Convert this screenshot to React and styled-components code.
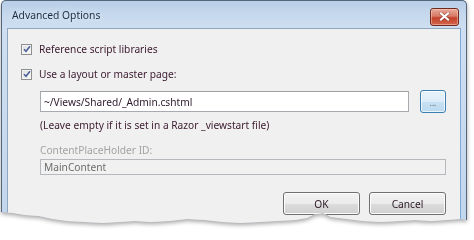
import React from "react";
import styled, { createGlobalStyle } from "styled-components";

const Global = createGlobalStyle`
  html, body { margin: 0; padding: 0; background: #ffffff; }
  body { width: 474px; height: 239px; overflow: hidden; font-family: "Noto Sans", "Open Sans", sans-serif; }
`;

const torn = [
  [0, 212], [12, 213], [24, 215], [38, 216], [52, 219], [66, 221], [84, 222], [102, 223], [118, 222],
  [134, 221], [150, 222], [168, 221], [186, 219], [204, 220], [222, 222], [240, 223], [258, 222],
  [276, 221], [294, 220], [306, 218], [314, 214], [322, 213], [330, 217], [346, 219], [362, 221],
  [380, 222], [398, 221], [414, 220], [430, 221], [446, 220], [458, 219], [466, 220],
];
const clip = `polygon(0 0, 466px 0, ${torn
  .slice()
  .reverse()
  .map(([x, y]) => `${x}px ${y}px`)
  .join(", ")})`;

const Stage = styled.div`
  padding: 0 0 0 1px;
  filter: drop-shadow(0 2px 2px rgba(0, 0, 0, 0.35));
`;

const Window = styled.div`
  width: 466px;
  height: 224px;
  box-sizing: border-box;
  border: 1px solid #55667a;
  border-bottom: none;
  border-radius: 5px 5px 0 0;
  background: linear-gradient(180deg, #b8cfe8 0px, #c6d8ed 14px, #cfdff1 28px, #c2d6ec 100%);
  clip-path: ${clip};
  display: flex;
  flex-direction: column;
  padding: 0 5px 0 5px;
`;

const TitleBar = styled.div`
  height: 27px;
  display: flex;
  align-items: center;
  justify-content: space-between;
  padding: 0 2px 0 5px;
`;

const Title = styled.span`
  font-size: 10.3px;
  color: #1b2f47;
  text-shadow: 0 0 6px rgba(255, 255, 255, 0.9);
`;

const CloseButton = styled.div`
  width: 27px;
  height: 16px;
  margin-top: 4px;
  border: 1px solid #70291d;
  border-radius: 3px;
  background: linear-gradient(180deg, #e9a998 0%, #d77a66 45%, #c4412b 55%, #d2664b 100%);
  display: flex;
  align-items: center;
  justify-content: center;
  box-shadow: inset 0 0 0 1px rgba(255, 220, 210, 0.45);
`;

const Client = styled.div`
  flex: 1;
  background: #f0f0f0;
  border: 1px solid #8fa6c0;
  border-right-color: #7fa9d8;
  border-bottom: none;
  display: flex;
  flex-direction: column;
  padding: 13px 14px 0 13px;
  color: #3b1a2e;
  font-size: 10.2px;
`;

const CheckRow = styled.label`
  display: flex;
  align-items: center;
  gap: 7px;
  height: 14px;
  margin-top: ${(p) => p.$mt || 0}px;
`;

const Box = styled.span`
  width: 9px;
  height: 9px;
  border: 1px solid #8e8f8f;
  background: linear-gradient(135deg, #dcdcdc, #fbfbfb);
  display: flex;
  align-items: center;
  justify-content: center;
  box-shadow: inset 0 0 0 1px #f4f4f4;
`;

const Indented = styled.div`
  padding-left: 19px;
  display: flex;
  flex-direction: column;
`;

const FieldRow = styled.div`
  display: flex;
  align-items: center;
  gap: 11px;
  margin-top: 9px;
`;

const TextBox = styled.div`
  flex: 1;
  box-sizing: border-box;
  border: 1px solid ${(p) => (p.$disabled ? "#b5b9bd" : "#a7abb0")};
  border-top-color: ${(p) => (p.$disabled ? "#b5b9bd" : "#9ca1a6")};
  background: ${(p) => (p.$disabled ? "#f1f1f1" : "#ffffff")};
  color: ${(p) => (p.$disabled ? "#6d6d6d" : "#2e1a28")};
  display: flex;
  align-items: center;
  padding-left: 3px;
  margin-top: ${(p) => p.$mt || 0}px;
  height: ${(p) => p.$h || 21}px;
`;

const BrowseButton = styled.div`
  width: 26px;
  height: 23px;
  box-sizing: border-box;
  border: 1px solid #3c7fb1;
  border-radius: 3px;
  background: linear-gradient(180deg, #e8f3fb 0%, #dcecf8 50%, #c7e1f3 51%, #bcd9ef 100%);
  box-shadow: inset 0 0 0 1px rgba(255, 255, 255, 0.7);
  display: flex;
  align-items: flex-end;
  justify-content: center;
  padding-bottom: 5px;
  font-size: 8px;
  color: #555;
  line-height: 1;
`;

const Note = styled.div`
  height: 14px;
  line-height: 14px;
  margin-top: ${(p) => p.$mt || 0}px;
  color: ${(p) => (p.$muted ? "#a3a3a3" : "inherit")};
`;

const Buttons = styled.div`
  display: flex;
  justify-content: flex-end;
  gap: 9px;
  margin-top: 17px;
`;

const Button = styled.div`
  width: 77px;
  height: 23px;
  box-sizing: border-box;
  border: 1px solid #707070;
  border-radius: 3px;
  background: linear-gradient(180deg, #f2f2f2 0%, #ebebeb 50%, #dddddd 51%, #cfcfcf 100%);
  box-shadow: inset 0 0 0 1px #fcfcfc;
  display: flex;
  align-items: center;
  justify-content: center;
  color: #2b1a26;
`;

const Check = () => (
  <svg width="8" height="8" viewBox="0 0 8 8">
    <path d="M1 4.2 L3 6.3 L7 1.2" fill="none" stroke="#4a5f97" strokeWidth="1.5" />
  </svg>
);

const XGlyph = () => (
  <svg width="11" height="9" viewBox="0 0 11 9">
    <path d="M2 1.5 L9 7.5 M9 1.5 L2 7.5" stroke="#5a1d14" strokeWidth="3.4" strokeLinecap="square" opacity="0.45" />
    <path d="M2 1.5 L9 7.5 M9 1.5 L2 7.5" stroke="#ffffff" strokeWidth="2.2" strokeLinecap="square" />
  </svg>
);

export default function App() {
  return (
    <>
      <Global />
      <Stage>
        <Window>
          <TitleBar>
            <Title>Advanced Options</Title>
            <CloseButton>
              <XGlyph />
            </CloseButton>
          </TitleBar>
          <Client>
            <CheckRow>
              <Box><Check /></Box>
              Reference script libraries
            </CheckRow>
            <CheckRow $mt={11}>
              <Box><Check /></Box>
              Use a layout or master page:
            </CheckRow>
            <Indented>
              <FieldRow>
                <TextBox>~/Views/Shared/_Admin.cshtml</TextBox>
                <BrowseButton>...</BrowseButton>
              </FieldRow>
              <Note $mt={5}>(Leave empty if it is set in a Razor _viewstart file)</Note>
              <Note $mt={11} $muted>ContentPlaceHolder ID:</Note>
              <TextBox $disabled $mt={2} $h={20}>MainContent</TextBox>
              <Buttons>
                <Button>OK</Button>
                <Button>Cancel</Button>
              </Buttons>
            </Indented>
          </Client>
        </Window>
      </Stage>
    </>
  );
}
